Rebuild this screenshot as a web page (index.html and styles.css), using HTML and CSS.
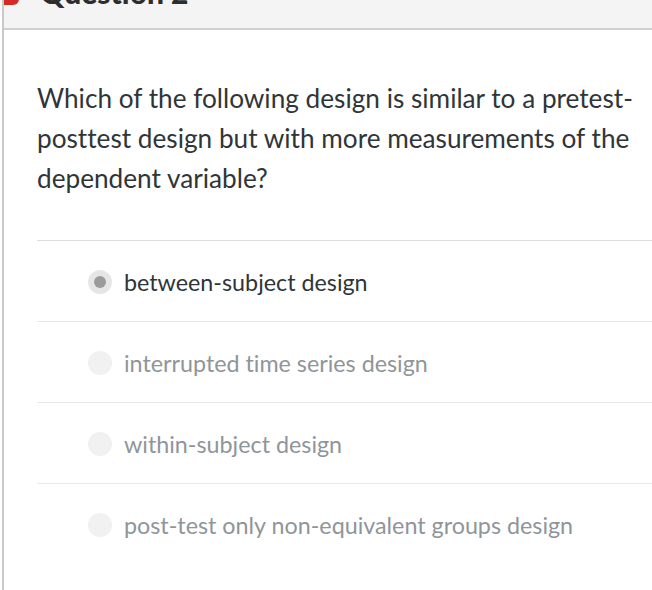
FILE: index.html
```html
<!DOCTYPE html>
<html>
<head>
<meta charset="utf-8">
<link rel="stylesheet" href="styles.css">
</head>
<body>
<div class="panel">
  <div class="header">
    <span class="badge"></span>
    <h2 class="title">Question 2</h2>
  </div>
  <div class="content">
    <p class="question">Which of the following design is similar to a pretest-posttest design but with more measurements of the dependent variable?</p>
    <ul class="answers">
      <li class="answer selected"><span class="radio"></span><span class="label">between-subject design</span></li>
      <li class="answer"><span class="radio"></span><span class="label">interrupted time series design</span></li>
      <li class="answer"><span class="radio"></span><span class="label">within-subject design</span></li>
      <li class="answer"><span class="radio"></span><span class="label">post-test only non-equivalent groups design</span></li>
    </ul>
  </div>
</div>
</body>
</html>
```
FILE: styles.css
```css
html, body {
  margin: 0;
  padding: 0;
  background: #ffffff;
  font-family: Lato, "Open Sans", sans-serif;
  font-variant-ligatures: none;
  overflow: hidden;
}
.panel {
  margin-left: 2px;
  border-left: 2px solid #c9c9c9;
  min-height: 590px;
  position: relative;
}
.header {
  height: 28px;
  background: #f4f4f4;
  border-bottom: 2px solid #d0d0d0;
  overflow: hidden;
  position: relative;
}
.badge {
  position: absolute;
  left: -4px;
  top: -10px;
  width: 19px;
  height: 15px;
  background: #d52a26;
  border-radius: 0 0 6px 3px;
}
.title {
  margin: -23px 0 0 36px;
  font-size: 30px;
  line-height: 30px;
  font-weight: 900;
  color: #2d2d2d;
}
.content {
  padding-left: 33px;
}
.question {
  margin: 48px 0 0 0;
  font-size: 26.2px;
  line-height: 40px;
  color: #2f3538;
  padding-right: 6px;
}
.answers {
  list-style: none;
  margin: 42px 0 0 0;
  padding: 0;
}
.answer {
  height: 81px;
  border-top: 1px solid #e8e8e8;
  display: flex;
  align-items: center;
  padding-left: 51px;
  padding-top: 1px;
  box-sizing: border-box;
}
.answer:first-child {
  border-top-color: #dedede;
}
.radio {
  width: 24px;
  height: 24px;
  border-radius: 50%;
  background: #f1f1f1;
  flex: none;
  display: flex;
  align-items: center;
  justify-content: center;
  margin-right: 12px;
}
.selected .radio {
  background: #e6e6e6;
}
.selected .radio::after {
  content: "";
  width: 12px;
  height: 12px;
  border-radius: 50%;
  background: #9b9b9b;
}
.label {
  font-size: 23.3px;
  color: #8f9599;
}
.selected .label {
  color: #2f3538;
}
```
